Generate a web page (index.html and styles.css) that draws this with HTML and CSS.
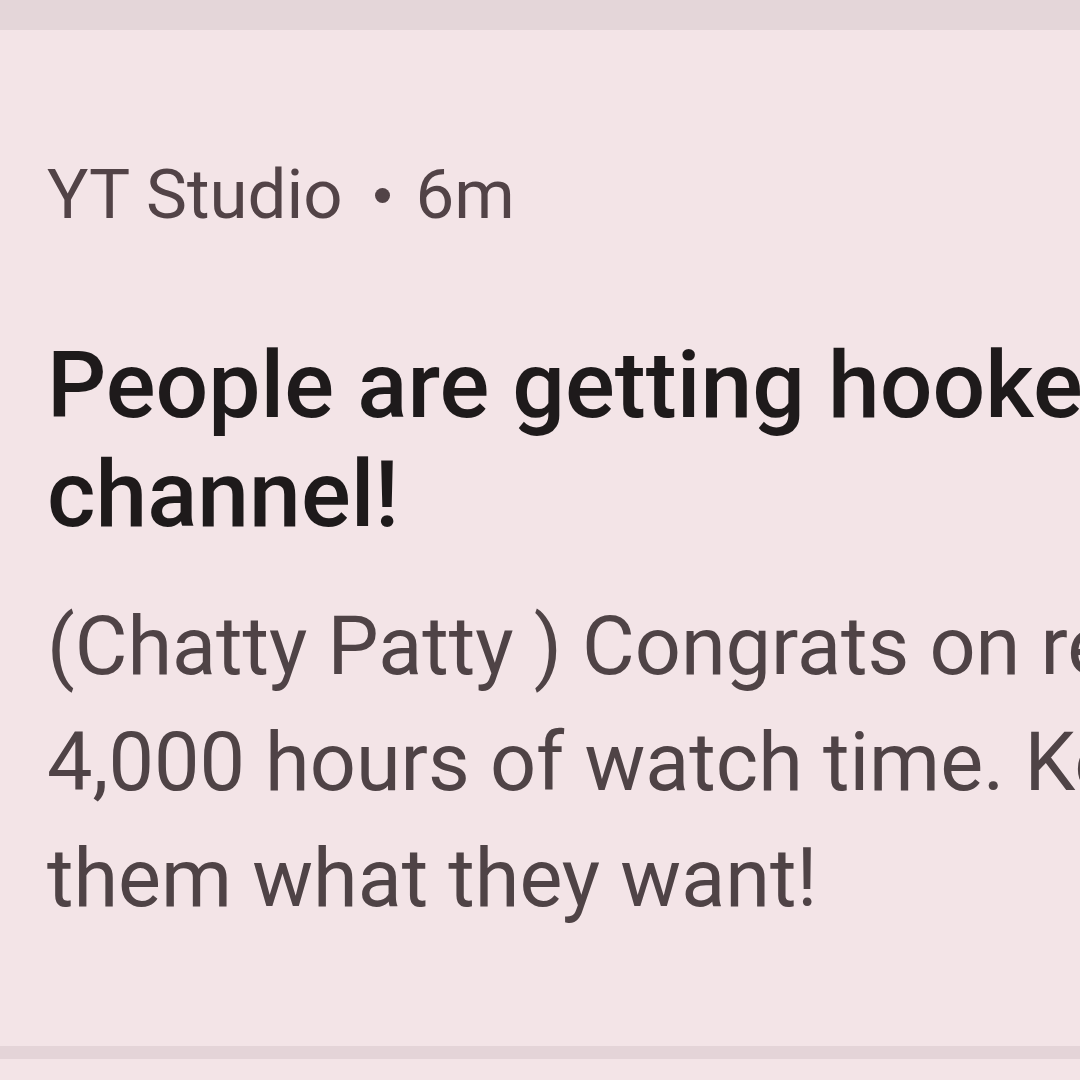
FILE: index.html
```html
<!DOCTYPE html>
<html lang="en">
<head>
  <meta charset="UTF-8" />
  <meta name="viewport" content="width=device-width, initial-scale=1.0"/>
  <title>Notifications</title>
  <link rel="stylesheet" href="styles.css">
</head>
<body>

  <div class="shade-top"></div>

  <div class="notification">
    <div class="meta">
      <span class="app">YT Studio</span>
      <span class="dot"></span>
      <span class="time">6m</span>
    </div>
    <h2 class="title">People are getting hooked on your<br>channel!</h2>
    <p class="text">(Chatty Patty ) Congrats on reaching<br>4,000 hours of watch time. Keep giving<br>them what they want!</p>
  </div>

  <div class="divider"></div>
  <div class="notification next"></div>

</body>
</html>
```

FILE: styles.css
```css
body {
  margin: 0;
  background-color: #e4d6d9;
  font-family: 'Roboto', 'Noto Sans', sans-serif;
  overflow: hidden;
  height: 1080px;
}

.shade-top {
  height: 30px;
  background-color: #e4d6d9;
}

.notification {
  background-color: #f3e4e7;
  padding: 123px 0 109px 47px;
  white-space: nowrap;
  overflow: hidden;
}

.meta {
  display: flex;
  align-items: baseline;
  font-size: 69px;
  line-height: 84px;
  color: #524347;
}

/* separator between app name and time */
.meta .dot {
  align-self: center;
  width: 15px;
  height: 15px;
  border-radius: 50%;
  background-color: #524347;
  margin: 0 26px 0 32px;
}

.title {
  margin: 94px 0 0;
  font-size: 93px;
  line-height: 109px;
  font-weight: 500;
  color: #1e1a1b;
}

.text {
  margin: 40px 0 0;
  font-size: 81px;
  line-height: 116px;
  color: #4f4346;
}

.divider {
  height: 13px;
  background-color: #e4d4d8;
}

.notification.next {
  padding: 0;
  height: 30px;
}
```
